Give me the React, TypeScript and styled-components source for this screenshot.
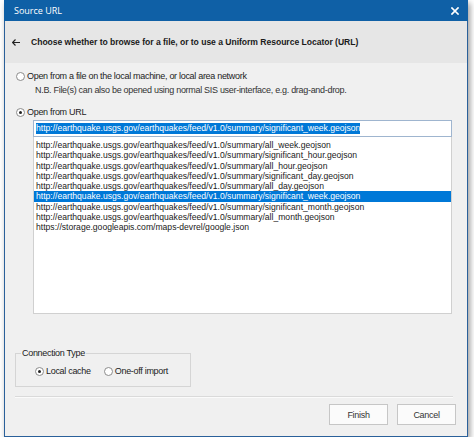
import React from 'react'
import styled, { createGlobalStyle } from 'styled-components'

const GlobalStyle = createGlobalStyle`
  html, body {
    margin: 0;
    padding: 0;
    background: #ffffff;
  }
  * {
    box-sizing: border-box;
  }
`

const urls = [
  'http://earthquake.usgs.gov/earthquakes/feed/v1.0/summary/all_week.geojson',
  'http://earthquake.usgs.gov/earthquakes/feed/v1.0/summary/significant_hour.geojson',
  'http://earthquake.usgs.gov/earthquakes/feed/v1.0/summary/all_hour.geojson',
  'http://earthquake.usgs.gov/earthquakes/feed/v1.0/summary/significant_day.geojson',
  'http://earthquake.usgs.gov/earthquakes/feed/v1.0/summary/all_day.geojson',
  'http://earthquake.usgs.gov/earthquakes/feed/v1.0/summary/significant_week.geojson',
  'http://earthquake.usgs.gov/earthquakes/feed/v1.0/summary/significant_month.geojson',
  'http://earthquake.usgs.gov/earthquakes/feed/v1.0/summary/all_month.geojson',
  'https://storage.googleapis.com/maps-devrel/google.json',
]

const SELECTED = 5

const Window = styled.div`
  margin-left: 4px;
  width: 464px;
  height: 437px;
  display: flex;
  flex-direction: column;
  background: #f0f0f0;
  border: 1px solid #2a609a;
  border-top: none;
  box-shadow: 2px 3px 6px rgba(0, 0, 0, 0.4);
  font-family: 'Liberation Sans', Arial, sans-serif;
  color: #000;
`

const TitleBar = styled.div`
  height: 21px;
  margin: 0 -1px;
  padding: 0 9px 0 10px;
  display: flex;
  align-items: center;
  justify-content: space-between;
  background: #0f60a6;
  color: #fff;
  font-family: 'Open Sans', 'Noto Sans', sans-serif;
  font-size: 9px;
`

const Header = styled.div`
  height: 42px;
  padding-left: 7px;
  display: flex;
  align-items: center;
  gap: 11px;
  background: #e6e6e6;
  font-size: 8.6px;
  font-weight: bold;
  letter-spacing: -0.04px;
  color: #1a1a1a;
`

const Body = styled.div`
  flex: 1;
  display: flex;
  flex-direction: column;
  padding-top: 7px;
`

const RadioRow = styled.label<{ $indent?: number }>`
  height: 12px;
  margin-left: ${(p) => p.$indent ?? 0}px;
  display: flex;
  align-items: center;
  gap: 2px;
  font-size: 9px;
  letter-spacing: -0.3px;
  color: #222;
`

const RadioCircle = styled.span<{ $checked?: boolean }>`
  width: 9px;
  height: 9px;
  border-radius: 50%;
  border: 1px solid #8c8c8c;
  background: #fff;
  display: flex;
  align-items: center;
  justify-content: center;

  &::after {
    content: '';
    width: 3px;
    height: 3px;
    border-radius: 50%;
    background: ${(p) => (p.$checked ? '#222' : 'transparent')};
  }
`

const Note = styled.div`
  height: 12px;
  margin: 2px 0 0 30px;
  display: flex;
  align-items: center;
  font-size: 9px;
  letter-spacing: -0.3px;
  color: #333;
`

const UrlInput = styled.div`
  margin: 2px 0 0 28px;
  width: 419px;
  height: 17px;
  padding: 2px 0 0 2px;
  border: 1px solid #9fb5cf;
  background: #fff;
  font-size: 8.6px;
`

const SelectedText = styled.span`
  display: inline-block;
  height: 11px;
  line-height: 11px;
  background: #0078d7;
  color: #fff;
`

const List = styled.div`
  margin-left: 28px;
  width: 419px;
  height: 177px;
  padding-top: 3px;
  border: 1px solid #d0d0d0;
  border-top: none;
  background: #fff;
  font-size: 8.6px;
`

const ListItem = styled.div<{ $selected?: boolean }>`
  height: 10.3px;
  line-height: 10.3px;
  padding-left: 2px;
  white-space: nowrap;
  background: ${(p) => (p.$selected ? '#0078d7' : 'transparent')};
  color: ${(p) => (p.$selected ? '#fff' : '#1a1a1a')};
`

const GroupBox = styled.div`
  position: relative;
  margin: 39px 0 0 10px;
  width: 176px;
  height: 34px;
  padding: 11px 0 0 19px;
  border: 1px solid #d5d5d5;
  display: flex;
  gap: 13px;
`

const GroupLabel = styled.span`
  position: absolute;
  left: 5px;
  top: -7px;
  padding: 0 1px;
  background: #f0f0f0;
  font-size: 9px;
  letter-spacing: -0.3px;
  line-height: 12px;
  color: #222;
`

const Separator = styled.div`
  margin: 9px 0 0 10px;
  width: 438px;
  border-top: 1px solid #dadada;
  border-bottom: 1px solid #fbfbfb;
`

const ButtonRow = styled.div`
  margin-top: 6px;
  padding-right: 11px;
  display: flex;
  justify-content: flex-end;
  gap: 9px;
`

const Button = styled.button`
  width: 59px;
  height: 21px;
  padding: 0;
  border: 1px solid #c6c6c6;
  background: #fbfbfb;
  font-family: 'Liberation Sans', Arial, sans-serif;
  font-size: 9px;
  letter-spacing: -0.3px;
  color: #333;
`

function CloseIcon() {
  return (
    <svg width="8" height="8" viewBox="0 0 8 8">
      <path d="M1 1 L7 7 M7 1 L1 7" stroke="#fff" strokeWidth="1.7" strokeLinecap="square" />
    </svg>
  )
}

function BackArrow() {
  return (
    <svg width="8" height="7" viewBox="0 0 8 7">
      <path d="M0.5 3.5 H8 M3.5 0.5 L0.5 3.5 L3.5 6.5" stroke="#222" strokeWidth="1.2" fill="none" />
    </svg>
  )
}

export default function App() {
  return (
    <>
      <GlobalStyle />
      <Window>
        <TitleBar>
          <span>Source URL</span>
          <CloseIcon />
        </TitleBar>
        <Header>
          <BackArrow />
          <span>Choose whether to browse for a file, or to use a Uniform Resource Locator (URL)</span>
        </Header>
        <Body>
          <RadioRow $indent={11}>
            <RadioCircle />
            Open from a file on the local machine, or local area network
          </RadioRow>
          <Note>N.B. File(s) can also be opened using normal SIS user-interface, e.g. drag-and-drop.</Note>
          <RadioRow $indent={11} style={{ marginTop: 10 }}>
            <RadioCircle $checked />
            Open from URL
          </RadioRow>
          <UrlInput>
            <SelectedText>{urls[SELECTED]}</SelectedText>
          </UrlInput>
          <List>
            {urls.map((u, i) => (
              <ListItem key={u} $selected={i === SELECTED}>
                {u}
              </ListItem>
            ))}
          </List>
          <GroupBox>
            <GroupLabel>Connection Type</GroupLabel>
            <RadioRow>
              <RadioCircle $checked />
              Local cache
            </RadioRow>
            <RadioRow>
              <RadioCircle />
              One-off import
            </RadioRow>
          </GroupBox>
          <Separator />
          <ButtonRow>
            <Button>Finish</Button>
            <Button>Cancel</Button>
          </ButtonRow>
        </Body>
      </Window>
    </>
  )
}
